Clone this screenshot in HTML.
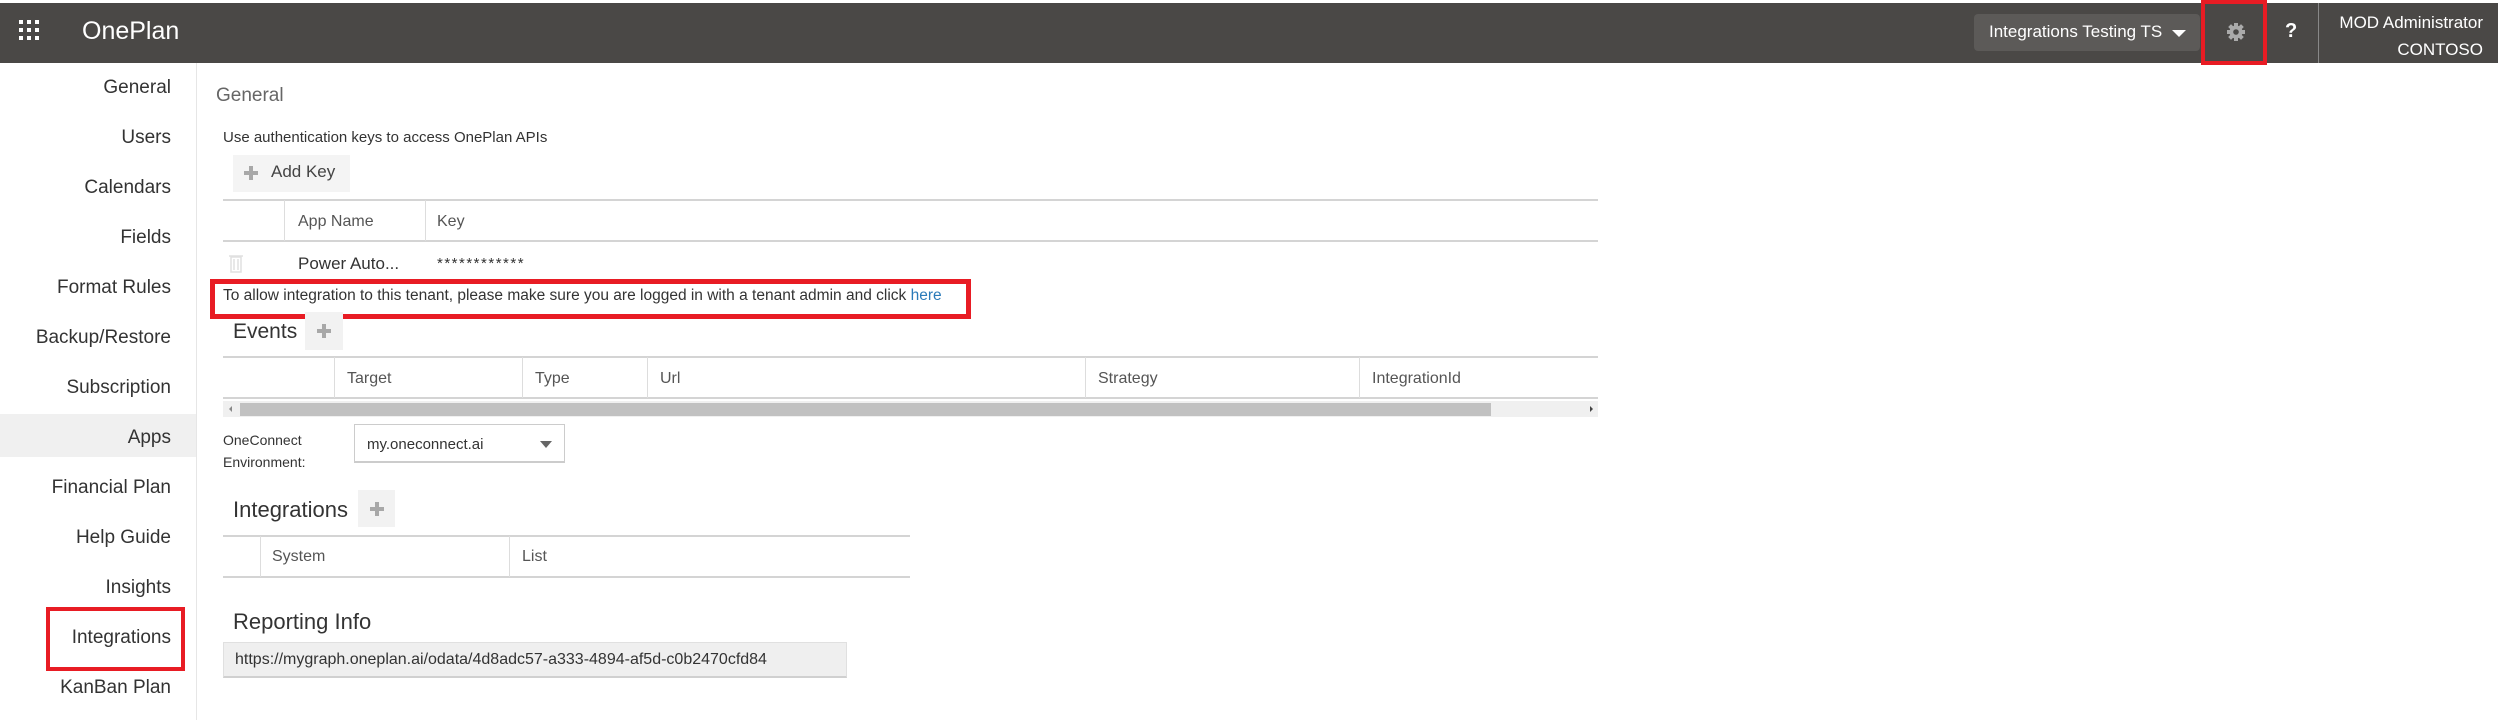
<!DOCTYPE html>
<html><head><meta charset="utf-8"><style>
*{margin:0;padding:0;box-sizing:border-box}
body{width:2498px;height:720px;position:relative;background:#fff;font-family:"Liberation Sans",sans-serif;color:#333;overflow:hidden}
.a{position:absolute;white-space:nowrap}
.hdr{left:0;top:3px;width:2498px;height:60px;background:#4a4846}
.side{right:2327px;font-size:19px;color:#333;line-height:24px;text-align:right}
.line{background:#d4d4d4;height:2px}
.vl{background:#ddd;width:1px}
.th{font-size:16px;color:#555}
.h2{font-size:22px;color:#333}
.plus{background:#f2f2f2}
.plus:before,.plus:after{content:"";position:absolute;background:#a8a8a8;left:50%;top:50%}
.plus:before{width:14px;height:4px;margin:-2px 0 0 -7px}
.plus:after{width:4px;height:14px;margin:-7px 0 0 -2px}
</style></head><body>
<div class="a hdr"></div>
<svg class="a" style="left:19px;top:20px" width="22" height="22">
<g fill="#fff"><rect x="0" y="0" width="4" height="4"/><rect x="8" y="0" width="4" height="4"/><rect x="16" y="0" width="4" height="4"/><rect x="0" y="8" width="4" height="4"/><rect x="8" y="8" width="4" height="4"/><rect x="16" y="8" width="4" height="4"/><rect x="0" y="16" width="4" height="4"/><rect x="8" y="16" width="4" height="4"/><rect x="16" y="16" width="4" height="4"/></g></svg>
<div class="a" style="left:82px;top:17px;font-size:25px;color:#fff">OnePlan</div>
<div class="a" style="left:1974px;top:14px;width:226px;height:37px;background:#5c5a58;border-radius:4px"></div>
<div class="a" style="left:1989px;top:22px;font-size:17px;color:#fff">Integrations Testing TS</div>
<div class="a" style="left:2172px;top:30px;width:0;height:0;border-left:7px solid transparent;border-right:7px solid transparent;border-top:7px solid #fff"></div>
<div class="a" style="left:2201px;top:0;width:66px;height:65px;border:4px solid #e81c24"></div>
<svg class="a" style="left:2226px;top:22px" width="20" height="20" viewBox="0 0 20 20"><g fill="#aaa"><circle cx="10" cy="10" r="6.5"/><g stroke="#aaa" stroke-width="4"><line x1="10" y1="1" x2="10" y2="19"/><line x1="1" y1="10" x2="19" y2="10"/><line x1="3.6" y1="3.6" x2="16.4" y2="16.4"/><line x1="16.4" y1="3.6" x2="3.6" y2="16.4"/></g></g><circle cx="10" cy="10" r="2.8" fill="#4a4846"/></svg>
<div class="a" style="left:2285px;top:20px;font-size:20px;font-weight:bold;color:#fff">?</div>
<div class="a" style="left:2318px;top:3px;width:1px;height:60px;background:#888"></div>
<div class="a" style="right:15px;top:9px;font-size:17px;color:#fff;text-align:right;line-height:27px">MOD Administrator<br>CONTOSO</div>

<div class="a" style="left:196px;top:63px;width:1px;height:657px;background:#e6e6e6"></div>
<div class="a" style="left:0;top:414px;width:196px;height:43px;background:#f0f0f0"></div>
<div class="a side" style="top:76px">General</div>
<div class="a side" style="top:126px">Users</div>
<div class="a side" style="top:176px">Calendars</div>
<div class="a side" style="top:226px">Fields</div>
<div class="a side" style="top:276px">Format Rules</div>
<div class="a side" style="top:326px">Backup/Restore</div>
<div class="a side" style="top:376px">Subscription</div>
<div class="a side" style="top:426px">Apps</div>
<div class="a side" style="top:476px">Financial Plan</div>
<div class="a side" style="top:526px">Help Guide</div>
<div class="a side" style="top:576px">Insights</div>
<div class="a side" style="top:626px">Integrations</div>
<div class="a side" style="top:676px">KanBan Plan</div>
<div class="a" style="left:46px;top:607px;width:139px;height:64px;border:4px solid #e81c24"></div>

<div class="a" style="left:216px;top:85px;font-size:19px;color:#666">General</div>
<div class="a" style="left:223px;top:129px;font-size:15px;color:#333">Use authentication keys to access OnePlan APIs</div>
<div class="a" style="left:233px;top:155px;width:117px;height:37px;background:#f4f4f4"></div>
<div class="a plus" style="left:240px;top:162px;width:22px;height:22px;background:none"></div>
<div class="a" style="left:271px;top:162px;font-size:17px;color:#444">Add Key</div>
<div class="a line" style="left:223px;top:199px;width:1375px"></div>
<div class="a line" style="left:223px;top:240px;width:1375px"></div>
<div class="a vl" style="left:284px;top:200px;height:41px"></div>
<div class="a vl" style="left:425px;top:200px;height:41px"></div>
<div class="a th" style="left:298px;top:213px">App Name</div>
<div class="a th" style="left:437px;top:213px">Key</div>
<svg class="a" style="left:229px;top:253px" width="14" height="20"><g fill="none" stroke="#e0e0e0" stroke-width="1.5"><rect x="2" y="4" width="10" height="15"/><line x1="0" y1="3" x2="14" y2="3"/><line x1="5" y1="6" x2="5" y2="17"/><line x1="9" y1="6" x2="9" y2="17"/></g></svg>
<div class="a" style="left:298px;top:254px;font-size:17px;color:#333">Power Auto...</div>
<div class="a" style="left:437px;top:255px;font-size:15px;color:#333;letter-spacing:1.5px">************</div>
<div class="a" style="left:210px;top:279px;width:761px;height:40px;border:5px solid #e81c24"></div>
<div class="a" style="left:223px;top:287px;font-size:15.5px;color:#333">To allow integration to this tenant, please make sure you are logged in with a tenant admin and click <span style="color:#2a7ab9">here</span></div>

<div class="a h2" style="left:233px;top:320px;font-size:21px">Events</div>
<div class="a plus" style="left:305px;top:312px;width:38px;height:38px"></div>
<div class="a line" style="left:223px;top:356px;width:1375px"></div>
<div class="a line" style="left:223px;top:397px;width:1375px"></div>
<div class="a vl" style="left:334px;top:357px;height:41px"></div>
<div class="a vl" style="left:522px;top:357px;height:41px"></div>
<div class="a vl" style="left:647px;top:357px;height:41px"></div>
<div class="a vl" style="left:1085px;top:357px;height:41px"></div>
<div class="a vl" style="left:1359px;top:357px;height:41px"></div>
<div class="a th" style="left:347px;top:370px">Target</div>
<div class="a th" style="left:535px;top:370px">Type</div>
<div class="a th" style="left:660px;top:370px">Url</div>
<div class="a th" style="left:1098px;top:370px">Strategy</div>
<div class="a th" style="left:1372px;top:370px">IntegrationId</div>
<div class="a" style="left:223px;top:401px;width:1375px;height:16px;background:#f0f0f0"></div>
<div class="a" style="left:240px;top:403px;width:1251px;height:13px;background:#c1c1c1"></div>
<div class="a" style="left:229px;top:406px;border-right:3px solid #888;border-top:3px solid transparent;border-bottom:3px solid transparent"></div>
<div class="a" style="left:1590px;top:406px;border-left:3px solid #444;border-top:3px solid transparent;border-bottom:3px solid transparent"></div>

<div class="a" style="left:223px;top:429px;font-size:14px;color:#333;line-height:22px">OneConnect<br>Environment:</div>
<div class="a" style="left:354px;top:424px;width:211px;height:39px;border:1px solid #ccc;border-bottom:2px solid #ccc"></div>
<div class="a" style="left:367px;top:436px;font-size:15px;color:#333">my.oneconnect.ai</div>
<div class="a" style="left:540px;top:441px;border-left:6px solid transparent;border-right:6px solid transparent;border-top:7px solid #666"></div>

<div class="a h2" style="left:233px;top:497px">Integrations</div>
<div class="a plus" style="left:358px;top:490px;width:37px;height:37px"></div>
<div class="a line" style="left:223px;top:535px;width:687px"></div>
<div class="a line" style="left:223px;top:576px;width:687px"></div>
<div class="a vl" style="left:260px;top:536px;height:41px"></div>
<div class="a vl" style="left:509px;top:536px;height:41px"></div>
<div class="a th" style="left:272px;top:548px">System</div>
<div class="a th" style="left:522px;top:548px">List</div>

<div class="a h2" style="left:233px;top:609px">Reporting Info</div>
<div class="a" style="left:223px;top:642px;width:624px;height:36px;background:#efefef;border:1px solid #e0e0e0;border-bottom:2px solid #d0d0d0"></div>
<div class="a" style="left:235px;top:651px;font-size:16px;color:#333">https://mygraph.oneplan.ai/odata/4d8adc57-a333-4894-af5d-c0b2470cfd84</div>
</body></html>
